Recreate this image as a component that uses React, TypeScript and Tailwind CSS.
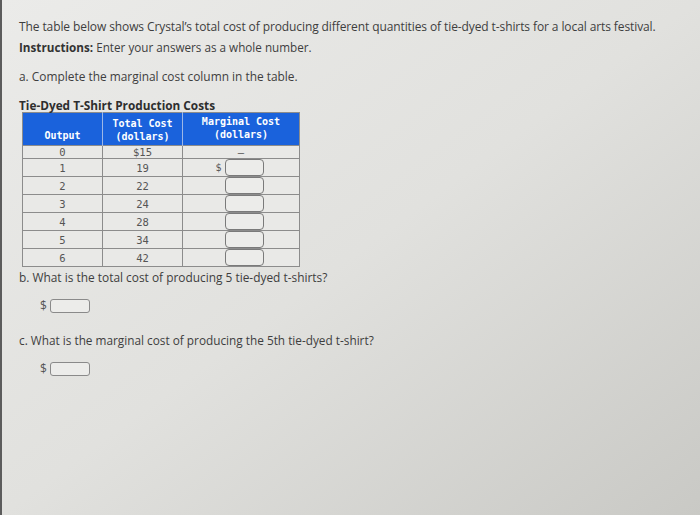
import { Fragment } from 'react';

const ROWS = [
  { output: '0', total: '$15' },
  { output: '1', total: '19' },
  { output: '2', total: '22' },
  { output: '3', total: '24' },
  { output: '4', total: '28' },
  { output: '5', total: '34' },
  { output: '6', total: '42' },
];

const sans = "font-['Open_Sans','Liberation_Sans',sans-serif]";
const mono = "font-['DejaVu_Sans_Mono','Liberation_Mono',monospace]";

function AnswerBox() {
  return (
    <div className="flex items-center gap-[3px] ml-[21px]">
      <span className="text-[12px] leading-[14px] text-[#555]">$</span>
      <div className="w-[40px] h-[14px] rounded-[3px] border border-[#8a8a8a] bg-[#ececea]" />
    </div>
  );
}

export default function App() {
  return (
    <div
      className={`w-[700px] h-[515px] overflow-hidden border-l-2 border-[#5c5c5c] bg-linear-to-br from-[#ebebe9] via-[#e1e1de] to-[#c9c9c5] text-[#3e3e3e] ${sans}`}
    >
      <div className="pt-[19px] pl-[17px]">
        <p className="text-[12px] leading-[16px] tracking-[-0.1px]">
          The table below shows Crystal’s total cost of producing different quantities of tie-dyed t-shirts for a local arts festival.
        </p>
        <p className="mt-[4px] text-[11.7px] leading-[16px]">
          <span className="font-bold text-[#333]">Instructions:</span> Enter your answers as a whole number.
        </p>
        <p className="mt-[13px] text-[11.9px] leading-[16px]">a. Complete the marginal cost column in the table.</p>

        <h2 className="mt-[15px] text-[11.8px] leading-[13px] font-bold text-[#2e2e2e]">Tie-Dyed T-Shirt Production Costs</h2>

        <table className={`ml-[3px] border-collapse border border-[#8c8c8c] ${mono}`}>
          <thead>
            <tr className="bg-[#1a62dc] text-white text-[10px] leading-[13px] font-bold h-[33px]">
              <th className="w-[80px] align-bottom pb-[3px] border-r border-[#9db7e6] font-bold">Output</th>
              <th className="w-[80px] align-bottom pb-[2px] border-r border-[#9db7e6] font-bold">
                Total Cost
                <br />
                (dollars)
              </th>
              <th className="w-[117px] align-bottom pb-[4px] font-bold">
                Marginal Cost
                <br />
                (dollars)
              </th>
            </tr>
          </thead>
          <tbody className="text-[10.5px] text-[#555]">
            {ROWS.map((r, i) => (
              <tr key={r.output} className={i === 0 ? 'h-[13px]' : 'h-[18px]'}>
                <td className="border border-[#8c8c8c] bg-[#e9e9e7] text-center leading-[12px] p-0">{r.output}</td>
                <td className="border border-[#8c8c8c] bg-[#e9e9e7] text-center leading-[12px] p-0">{r.total}</td>
                <td className="border border-[#8c8c8c] bg-[#e9e9e7] p-0">
                  {i === 0 ? (
                    <div className="text-center leading-[12px]">–</div>
                  ) : (
                    <Fragment>
                      <div className="flex items-center justify-center gap-[3px] pr-[3px]">
                        <span className={`${i === 1 ? '' : 'invisible'} text-[10px]`}>$</span>
                        <div className="w-[39px] h-[17px] rounded-[4px] border border-[#7a7a7a] bg-[#ececea]" />
                      </div>
                    </Fragment>
                  )}
                </td>
              </tr>
            ))}
          </tbody>
        </table>

        <p className="mt-[3px] text-[11.9px] leading-[14px]">b. What is the total cost of producing 5 tie-dyed t-shirts?</p>
        <div className="mt-[15px]">
          <AnswerBox />
        </div>

        <p className="mt-[20px] text-[11.8px] leading-[14px]">c. What is the marginal cost of producing the 5th tie-dyed t-shirt?</p>
        <div className="mt-[15px]">
          <AnswerBox />
        </div>
      </div>
    </div>
  );
}
